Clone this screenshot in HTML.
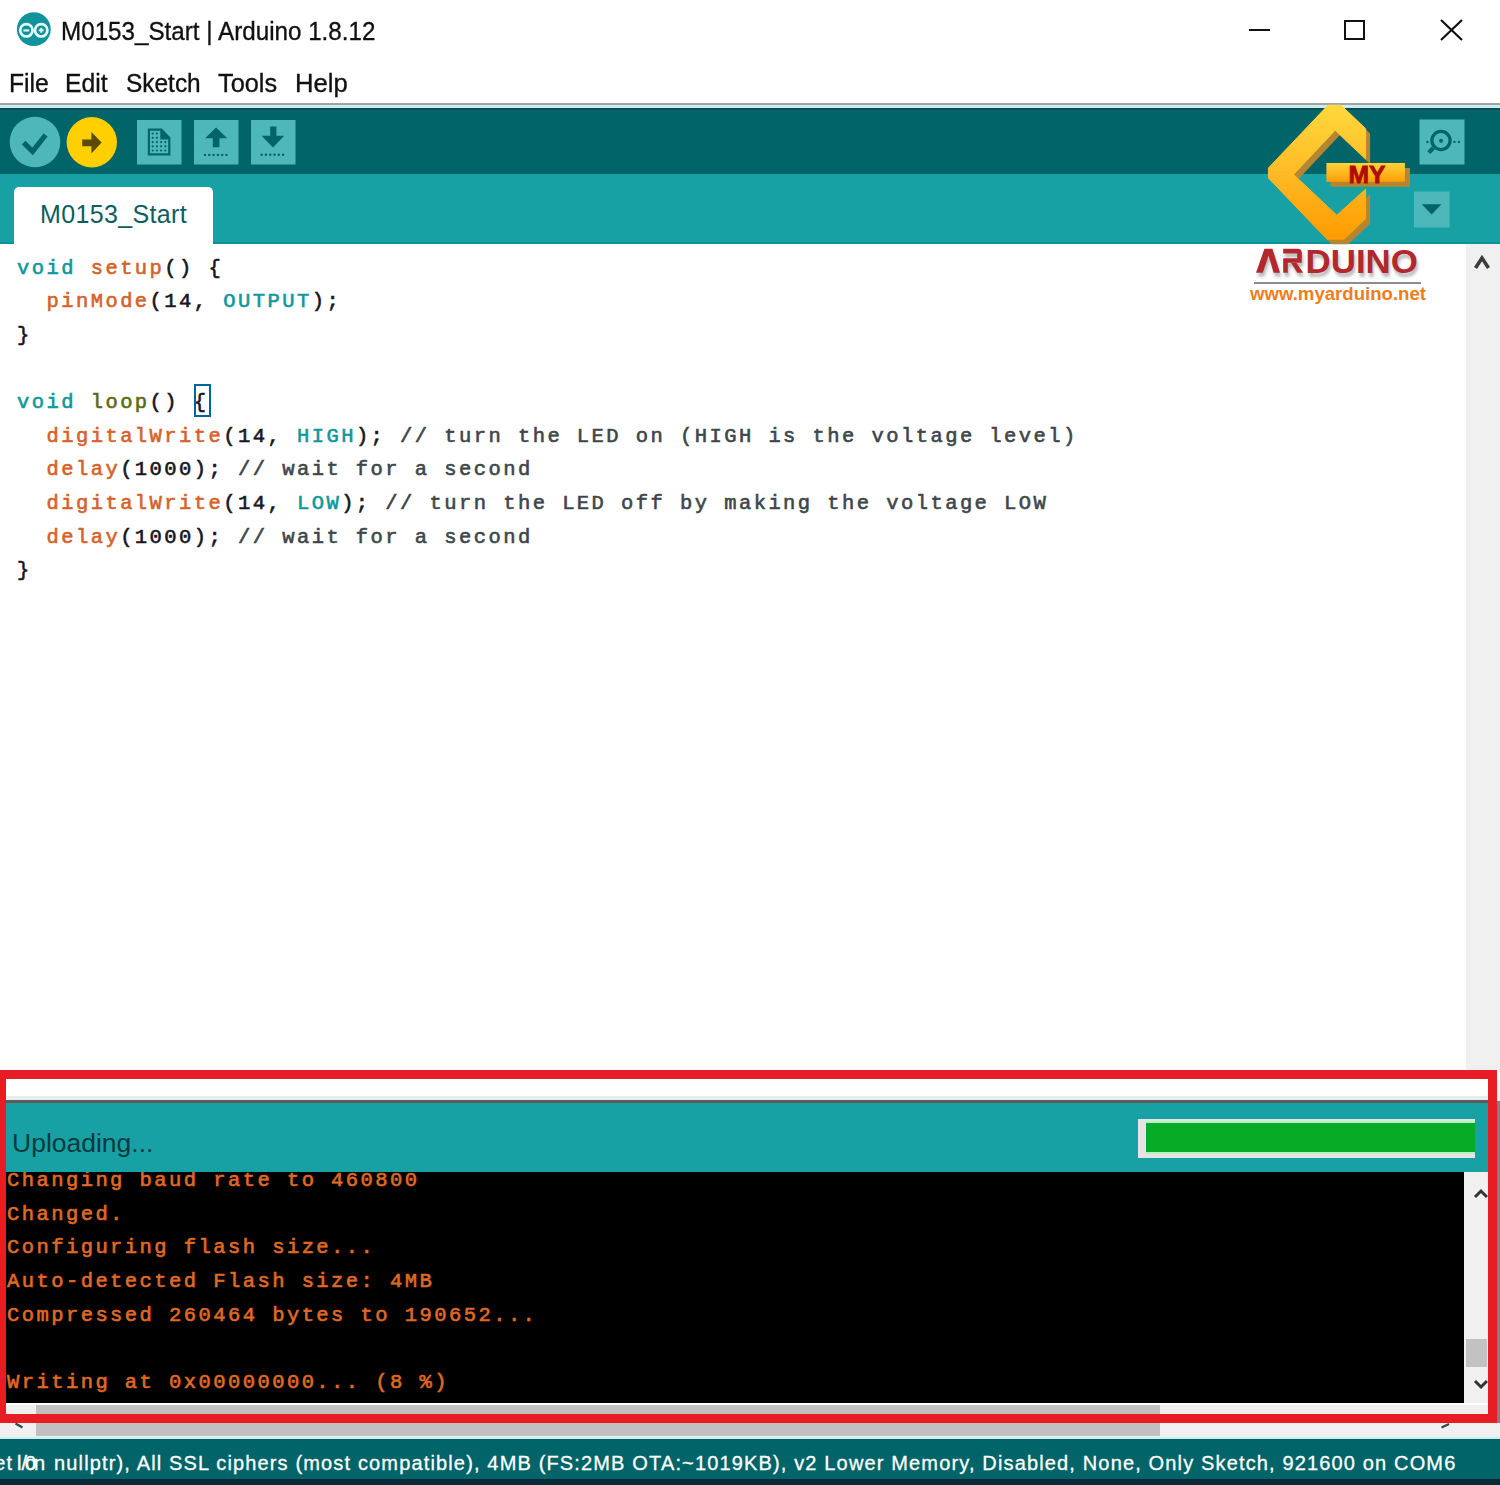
<!DOCTYPE html>
<html><head><meta charset="utf-8">
<style>
*{margin:0;padding:0;box-sizing:border-box}
html,body{width:1500px;height:1485px;overflow:hidden;background:#fff;position:relative}
body{font-family:"Liberation Sans",sans-serif}
.a{position:absolute}
.t{position:absolute;white-space:pre;line-height:0}
.k1{color:#10979b}.fn{color:#d6622a}.k3{color:#5e6a10}.cm{color:#3e464a}
#code div{white-space:pre;height:33.66px}
#cin div{white-space:pre;height:33.74px}
.mono{font-family:"Liberation Mono",monospace}
</style></head><body>

<!-- title bar -->
<svg class="a" style="left:0;top:0" width="60" height="60" viewBox="0 0 60 60">
  <circle cx="33.8" cy="29.2" r="16.9" fill="#10939a"/>
  <circle cx="26.4" cy="30.3" r="6.2" fill="none" stroke="#e8fcfc" stroke-width="2.7"/>
  <circle cx="41.2" cy="30.3" r="6.2" fill="none" stroke="#e8fcfc" stroke-width="2.7"/>
  <rect x="23.4" y="29.4" width="5.8" height="2.1" fill="#e8fcfc"/>
  <rect x="38.8" y="29.3" width="4.8" height="2" fill="#e8fcfc"/><rect x="40.2" y="27.9" width="2" height="4.8" fill="#e8fcfc"/>
</svg>
<div class="t" id="title" style="left:61px;top:31px;font-size:26px;color:#111;-webkit-text-stroke:0.35px #111;transform:scaleX(0.931);transform-origin:0 0">M0153_Start | Arduino 1.8.12</div>

<!-- window controls -->
<div class="a" style="left:1249px;top:29px;width:21px;height:2px;background:#111"></div>
<div class="a" style="left:1344px;top:20px;width:21px;height:20px;border:2px solid #111"></div>
<svg class="a" style="left:1440px;top:19px" width="23" height="22" viewBox="0 0 23 22"><path d="M1 1L22 21M22 1L1 21" stroke="#111" stroke-width="2.2"/></svg>

<!-- menu -->
<div class="t" style="left:9px;top:83px;font-size:26px;color:#111;-webkit-text-stroke:0.35px #111;transform:scaleX(0.95);transform-origin:0 0">File</div>
<div class="t" style="left:65px;top:83px;font-size:26px;color:#111;-webkit-text-stroke:0.35px #111;transform:scaleX(0.95);transform-origin:0 0">Edit</div>
<div class="t" style="left:126px;top:83px;font-size:26px;color:#111;-webkit-text-stroke:0.35px #111;transform:scaleX(0.94);transform-origin:0 0">Sketch</div>
<div class="t" style="left:218px;top:83px;font-size:26px;color:#111;-webkit-text-stroke:0.35px #111;transform:scaleX(0.975);transform-origin:0 0">Tools</div>
<div class="t" style="left:295px;top:83px;font-size:26px;color:#111;-webkit-text-stroke:0.35px #111;transform:scaleX(0.985);transform-origin:0 0">Help</div>

<div class="a" style="left:0;top:102.5px;width:1500px;height:2.5px;background:#a6a2a2"></div>
<div class="a" style="left:0;top:105px;width:1500px;height:3px;background:#c8eef2"></div>
<div class="a" style="left:0;top:108px;width:1500px;height:2px;background:#0b4c52"></div>

<!-- toolbar -->
<div class="a" style="left:0;top:110px;width:1500px;height:64px;background:#006468"></div>
<!-- tab bar -->
<div class="a" style="left:0;top:174px;width:1500px;height:69px;background:#17a1a5"></div>
<div class="a" style="left:213px;top:242px;width:1287px;height:2px;background:#0b9398"></div>
<div class="a" style="left:0;top:242px;width:14px;height:2px;background:#0b9398"></div>
<div class="a" style="left:14px;top:187px;width:199px;height:57px;background:#fff;border-radius:5px 5px 0 0"></div>
<div class="t" id="tabt" style="left:40px;top:214px;font-size:25px;letter-spacing:0.35px;color:#0d5e5e">M0153_Start</div>


<!-- toolbar buttons -->
<svg class="a" style="left:0;top:110px" width="320" height="64" viewBox="0 110 320 64">
  <circle cx="35" cy="142" r="25.3" fill="#4db7ba"/>
  <path d="M23.6 142.6L32.6 151.4L45.6 135" fill="none" stroke="#006468" stroke-width="5.2"/>
  <circle cx="91.8" cy="142.2" r="25.2" fill="#ffcf00"/>
  <path d="M82.2 139.4H91.4V132L101.6 142.6L91.4 153.4V146.2H82.2Z" fill="#5a4b00"/>
  <rect x="137" y="120" width="44.5" height="44.5" fill="#4db7ba"/>
  <rect x="194" y="120" width="44.5" height="44.5" fill="#4db7ba"/>
  <rect x="251" y="120" width="44.5" height="44.5" fill="#4db7ba"/>
  <path d="M147.8 128.6H161.8L170.4 137.4V155.4H147.8Z" fill="#006468"/>
  <path d="M150 130.8H160.3V139.6H168.2V153.2H150Z" fill="#4db7ba"/>
  <g fill="#006468">
   <circle cx="152.7" cy="133.5" r="1.1"/><circle cx="156.9" cy="133.5" r="1.1"/>
   <circle cx="152.7" cy="137.8" r="1.1"/><circle cx="156.9" cy="137.8" r="1.1"/>
   <circle cx="152.7" cy="142.1" r="1.1"/><circle cx="156.9" cy="142.1" r="1.1"/><circle cx="161.1" cy="142.1" r="1.1"/><circle cx="165.3" cy="142.1" r="1.1"/>
   <circle cx="152.7" cy="146.3" r="1.1"/><circle cx="156.9" cy="146.3" r="1.1"/><circle cx="161.1" cy="146.3" r="1.1"/><circle cx="165.3" cy="146.3" r="1.1"/>
   <circle cx="152.7" cy="150.5" r="1.1"/><circle cx="156.9" cy="150.5" r="1.1"/><circle cx="161.1" cy="150.5" r="1.1"/><circle cx="165.3" cy="150.5" r="1.1"/>
  </g>
  <path d="M216.1 127.6L227.2 138.2H219.4V147.2H212.8V138.2H205.1Z" fill="#006468"/>
  <path d="M270.2 126.4H276.4V135.8H284.2L273 147.4L261.6 135.8H270.2Z" fill="#006468"/>
  <g fill="#006468">
   <circle cx="205" cy="154.9" r="1.2"/><circle cx="209.3" cy="154.9" r="1.2"/><circle cx="213.6" cy="154.9" r="1.2"/><circle cx="217.9" cy="154.9" r="1.2"/><circle cx="222.2" cy="154.9" r="1.2"/><circle cx="226.5" cy="154.9" r="1.2"/>
   <circle cx="261.6" cy="154.7" r="1.2"/><circle cx="265.9" cy="154.7" r="1.2"/><circle cx="270.2" cy="154.7" r="1.2"/><circle cx="274.5" cy="154.7" r="1.2"/><circle cx="278.8" cy="154.7" r="1.2"/><circle cx="283.1" cy="154.7" r="1.2"/>
  </g>
</svg>
<svg class="a" style="left:1400px;top:110px" width="100" height="130" viewBox="1400 110 100 130">
  <rect x="1419.5" y="119.5" width="45" height="45" fill="#4db7ba"/>
  <circle cx="1441" cy="140.5" r="9.1" fill="none" stroke="#006468" stroke-width="3.3"/>
  <circle cx="1441" cy="140.8" r="2" fill="#006468"/>
  <path d="M1433.2 148L1428.8 152.6" stroke="#006468" stroke-width="4.2"/>
  <circle cx="1427.4" cy="141.9" r="1.2" fill="#006468"/>
  <circle cx="1454.5" cy="141.9" r="1.2" fill="#006468"/>
  <circle cx="1458.9" cy="141.9" r="1.2" fill="#006468"/>
  <rect x="1414" y="191.5" width="35.5" height="36" fill="#4db7ba"/>
  <path d="M1421.8 204.2H1441.4L1431.6 214.6Z" fill="#006468"/>
</svg>


<!-- logo -->
<svg class="a" style="left:1240px;top:100px" width="200" height="210" viewBox="1240 100 200 210">
 <defs>
  <linearGradient id="gc" x1="0" y1="0" x2="0" y2="1">
   <stop offset="0" stop-color="#ffd83c"/><stop offset="0.5" stop-color="#ffbb26"/><stop offset="1" stop-color="#ff9a00"/>
  </linearGradient>
  <linearGradient id="gm" x1="0" y1="0" x2="0" y2="1">
   <stop offset="0" stop-color="#ffd43a"/><stop offset="1" stop-color="#ff9c08"/>
  </linearGradient>
  <filter id="bl" x="-20%" y="-50%" width="140%" height="200%"><feGaussianBlur stdDeviation="1.6"/></filter>
 </defs>
 <path d="M1328 105.2H1341L1365.6 128.6V159L1335.2 130.2L1293.6 174.5L1336.8 215.2L1365.6 189.2V218.8L1344 239.2H1327L1268.4 178V168Z" fill="#b5852f" transform="translate(4.5,5)"/>
 <path d="M1328 105.2H1341L1365.6 128.6V159L1335.2 130.2L1293.6 174.5L1336.8 215.2L1365.6 189.2V218.8L1344 239.2H1327L1268.4 178V168Z" fill="url(#gc)" stroke="url(#gc)" stroke-width="1" stroke-linejoin="round"/>
 <rect x="1330.5" y="168" width="79.5" height="18.8" fill="#b5852f"/>
 <rect x="1326.4" y="163" width="78.5" height="18.8" fill="url(#gm)"/>
 <text x="1348.4" y="183" font-family="Liberation Sans" font-weight="bold" font-size="23.5" fill="#b00a00" stroke="#b00a00" stroke-width="0.8" textLength="37" lengthAdjust="spacingAndGlyphs">MY</text>
 <g filter="url(#bl)" opacity="0.4" transform="translate(1.5,4)" fill="#555">
  <path d="M1256 272.8L1264.4 248.8H1272.4L1280 272.8H1273.6L1268.6 255.5L1262.8 272.8Z"/>
  <path d="M1283.2 248.8H1297.5Q1301.8 248.8 1301.8 253V262.8H1287.8V272.8H1283.2V258.2H1297.2V253.4H1283.2Z"/>
  <path d="M1291 262.8H1296.4L1303.2 272.8H1297.4Z"/>
  <text x="1305.5" y="272.8" font-family="Liberation Sans" font-weight="bold" font-size="33" textLength="112.5" lengthAdjust="spacingAndGlyphs">DUINO</text>
 </g>
 <g fill="#b3282d">
  <path d="M1256 272.8L1264.4 248.8H1272.4L1280 272.8H1273.6L1268.6 255.5L1262.8 272.8Z"/>
  <path d="M1283.2 248.8H1297.5Q1301.8 248.8 1301.8 253V262.8H1287.8V272.8H1283.2V258.2H1297.2V253.4H1283.2Z"/>
  <path d="M1291 262.8H1296.4L1303.2 272.8H1297.4Z"/>
  <text x="1305.5" y="272.8" font-family="Liberation Sans" font-weight="bold" font-size="33" textLength="112.5" lengthAdjust="spacingAndGlyphs">DUINO</text>
 </g>
 <rect x="1254" y="282" width="167" height="2" fill="#8c8c8c"/>
 <text x="1250" y="300" font-family="Liberation Sans" font-weight="bold" font-size="17.5" fill="#f07d1c" textLength="176" lengthAdjust="spacingAndGlyphs">www.myarduino.net</text>
</svg>

<!-- editor -->
<!-- code -->
<div class="a mono" id="code" style="left:17px;top:251.5px;font-size:20.5px;letter-spacing:2.43px;-webkit-text-stroke:0.6px currentColor;line-height:33.66px;color:#161620">
<div><span class="k1">void</span> <span class="fn">setup</span>() {</div>
<div>  <span class="fn">pinMode</span>(14, <span class="k1">OUTPUT</span>);</div>
<div>}</div>
<div> </div>
<div><span class="k1">void</span> <span class="k3">loop</span>() {</div>
<div>  <span class="fn">digitalWrite</span>(14, <span class="k1">HIGH</span>); <span class="cm">// turn the LED on (HIGH is the voltage level)</span></div>
<div>  <span class="fn">delay</span>(1000); <span class="cm">// wait for a second</span></div>
<div>  <span class="fn">digitalWrite</span>(14, <span class="k1">LOW</span>); <span class="cm">// turn the LED off by making the voltage LOW</span></div>
<div>  <span class="fn">delay</span>(1000); <span class="cm">// wait for a second</span></div>
<div>}</div>
</div>
<div class="a" style="left:194px;top:384px;width:17px;height:33px;border:2px solid #006699"></div>

<div class="a" style="left:1466px;top:244px;width:34px;height:826px;background:#f0f0f0"></div>

<svg class="a" style="left:1466px;top:244px" width="34" height="40" viewBox="0 0 34 40"><path d="M9.5 24L16 14L22.5 24" fill="none" stroke="#3c3c3c" stroke-width="3.6"/></svg>
<!-- red box / console -->
<div class="a" style="left:0;top:1070px;width:1497px;height:353px;border:9px solid #e81c24;border-left-width:6px"></div>
<div class="a" style="left:6px;top:1103px;width:1482px;height:69px;background:#17a1a5"></div>
<div class="a" style="left:6px;top:1172px;width:1458px;height:231px;background:#000"></div>


<!-- console content -->
<div class="a" style="left:6px;top:1079px;width:1482px;height:17px;background:#fff"></div>
<div class="a" style="left:6px;top:1096px;width:1482px;height:4px;background:#e9edef"></div>
<div class="a" style="left:6px;top:1100px;width:1482px;height:3px;background:#5f5a5a"></div>
<div class="t" id="upl" style="left:12px;top:1143px;font-size:26.5px;color:#0a3a3c">Uploading...</div>
<div class="a" style="left:1138px;top:1119px;width:337px;height:39px;background:#e4e4e4"></div>
<div class="a" style="left:1146px;top:1121px;width:329px;height:2px;background:#b9f0c0"></div>
<div class="a" style="left:1146px;top:1123px;width:329px;height:29px;background:#08ab25"></div>
<div class="a" style="left:1146px;top:1152px;width:329px;height:2px;background:#b9f0c0"></div>
<div class="a mono" id="console" style="left:6px;top:1172px;width:1458px;height:231px;overflow:hidden;font-size:20.5px;letter-spacing:2.43px;-webkit-text-stroke:0.6px currentColor;line-height:33.74px;color:#e06a24"><div id="cin" style="position:absolute;left:1px;top:-8px">
<div>Changing baud rate to 460800</div>
<div>Changed.</div>
<div>Configuring flash size...</div>
<div>Auto-detected Flash size: 4MB</div>
<div>Compressed 260464 bytes to 190652...</div>
<div> </div>
<div>Writing at 0x00000000... (8 %)</div>
</div></div>
<div class="a" style="left:6px;top:1172px;width:1482px;height:0;"></div>
<!-- console v scrollbar -->
<div class="a" style="left:1464px;top:1172px;width:24px;height:231px;background:#f0f0f0"></div>
<div class="a" style="left:1466px;top:1339px;width:21px;height:28px;background:#c2c2c2"></div>
<svg class="a" style="left:1464px;top:1172px" width="24" height="231" viewBox="0 0 24 231">
 <path d="M11 25L17 19L23 25" fill="none" stroke="#333" stroke-width="3"/>
 <path d="M11 209L17 215L23 209" fill="none" stroke="#333" stroke-width="3"/>
</svg>
<!-- h scrollbars -->
<div class="a" style="left:6px;top:1403px;width:1458px;height:2px;background:#fff"></div>
<div class="a" style="left:6px;top:1405px;width:1482px;height:9px;background:#f0f0f0"></div>
<div class="a" style="left:36px;top:1405px;width:1124px;height:9px;background:#c0c0c0"></div>
<div class="a" style="left:0;top:1423px;width:1500px;height:14px;background:#f0f0f0"></div>
<div class="a" style="left:36px;top:1423px;width:1124px;height:13px;background:#c0c0c0"></div>
<div class="a" style="left:0;top:1437px;width:1500px;height:2px;background:#c8f0f2"></div>
<svg class="a" style="left:0;top:1420px" width="1500" height="14" viewBox="0 1420 1500 14">
 <path d="M15.5 1423.5L22.5 1427.5" stroke="#2a4a4a" stroke-width="2.2"/>
 <path d="M1441.5 1427.5L1449 1424" stroke="#2a4a4a" stroke-width="2.2"/>
</svg>


<div class="a" style="left:1497px;top:1080px;width:3px;height:21px;background:#efefef"></div>
<div class="a" style="left:1497px;top:1101px;width:3px;height:322px;background:#8c7c82"></div>
<!-- status bar -->
<div class="a" style="left:0;top:1439px;width:1500px;height:40px;background:#006468"></div>
<div class="a" style="left:0;top:1479px;width:1500px;height:6px;background:#0a2a3a"></div>


<div class="t" id="stat" style="left:54px;top:1463px;font-size:20px;color:#fff;letter-spacing:1.15px;-webkit-text-stroke:0.3px #fff">nullptr), All SSL ciphers (most compatible), 4MB (FS:2MB OTA:~1019KB), v2 Lower Memory, Disabled, None, Only Sketch, 921600 on COM6</div>
<div class="t" style="right:1487px;top:1463px;font-size:20px;color:#fff;-webkit-text-stroke:0.3px #fff;letter-spacing:1px">et</div>
<div class="t" style="left:17px;top:1463px;font-size:20px;color:#fff;-webkit-text-stroke:0.4px #fff">l/</div>
<div class="t" style="left:25px;top:1463px;font-size:20px;color:#fff;-webkit-text-stroke:0.3px #fff">0</div>
<div class="t" style="left:25px;top:1463px;font-size:20px;color:#fff;-webkit-text-stroke:0.3px #fff">o</div>
<div class="t" style="left:34px;top:1463px;font-size:20px;color:#fff;-webkit-text-stroke:0.3px #fff">n</div>

</body></html>
